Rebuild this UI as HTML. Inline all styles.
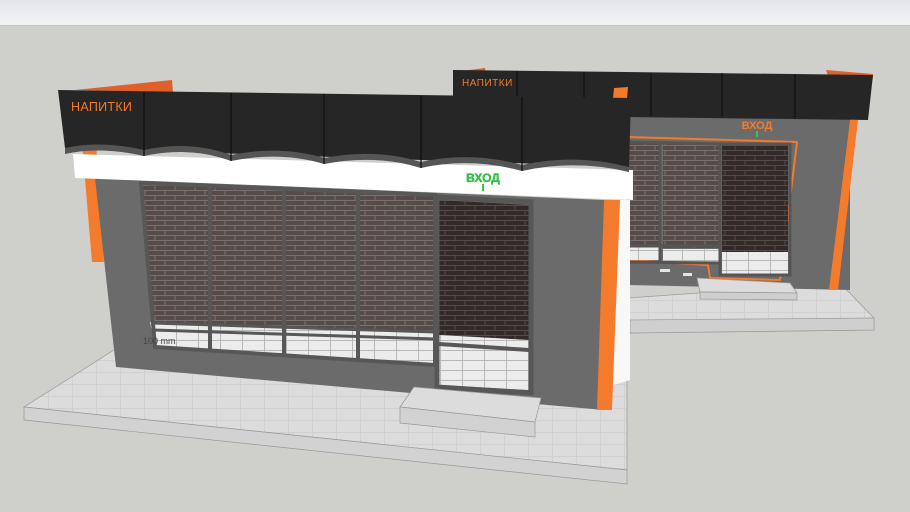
<!DOCTYPE html>
<html><head><meta charset="utf-8"><style>
html,body{margin:0;padding:0;width:910px;height:512px;overflow:hidden;background:#cfcfcb}
svg{display:block}
text{font-family:"Liberation Sans","DejaVu Sans",sans-serif}
</style></head><body>
<svg width="910" height="512" viewBox="0 0 910 512" xmlns="http://www.w3.org/2000/svg">
<defs>
<linearGradient id="sky" x1="0" y1="0" x2="0" y2="1"><stop offset="0" stop-color="#e3e6e9"/><stop offset="1" stop-color="#f1f2f3"/></linearGradient>
<pattern id="brick" width="20" height="10" patternUnits="userSpaceOnUse">
<rect width="20" height="10" fill="#554b49"/>
<path d="M0 0.5H20M0 5.5H20M5 0V5M15 5V10" stroke="#7a7271" stroke-width="1"/>
</pattern>
<pattern id="brickd" width="20" height="10" patternUnits="userSpaceOnUse">
<rect width="20" height="10" fill="#322a29"/>
<path d="M0 0.5H20M0 5.5H20M5 0V5M15 5V10" stroke="#544c4b" stroke-width="1"/>
</pattern>
<pattern id="tile" width="24" height="12" patternUnits="userSpaceOnUse">
<rect width="24" height="12" fill="#dcdcdc"/>
<path d="M0 0.5H24M0.5 0V12" stroke="#d0d0d0" stroke-width="1"/>
</pattern>
<pattern id="floor" width="22" height="10" patternUnits="userSpaceOnUse">
<rect width="22" height="10" fill="#ececec"/>
<path d="M0 0.5H22M0.5 0V10" stroke="#b8b8b8" stroke-width="1"/>
</pattern>
</defs>
<rect width="910" height="25" fill="url(#sky)"/>
<rect y="25" width="910" height="1" fill="#c4c4c0"/>

<!-- BACK BUILDING -->
<polygon points="600,300 840,283 874,318 874,330 630,333 600,320" fill="url(#tile)" stroke="#999" stroke-width="0.7"/>
<polygon points="630,320 874,318 874,330 630,333" fill="#cfcfcf" stroke="#999" stroke-width="0.7"/>
<polygon points="628,110 850,118 850,290 628,285" fill="#6b6b6b"/>
<polygon points="850,120 858,120 838,290 829,290" fill="#f47a2c"/>
<polygon points="628,137 797,142 780,280 710,278 708,265 628,260" fill="none" stroke="#f47a2c" stroke-width="2"/>
<rect x="629" y="142" width="30" height="104" fill="url(#brick)"/>
<rect x="663" y="143" width="56" height="105" fill="url(#brick)"/>
<rect x="629" y="247" width="30" height="13" fill="url(#floor)"/>
<rect x="663" y="249" width="56" height="13" fill="url(#floor)"/>
<path d="M628 142 L720 144 L720 263 L628 262 Z M660 142V262 M628 246H720" fill="none" stroke="#555" stroke-width="3"/>
<rect x="722" y="145" width="66" height="108" fill="url(#brickd)"/>
<rect x="722" y="252" width="66" height="22" fill="url(#floor)"/>
<rect x="720" y="144" width="70" height="131" fill="none" stroke="#555" stroke-width="3"/>
<rect x="660" y="269" width="10" height="3" fill="#dfe6ea"/>
<rect x="683" y="273" width="9" height="3" fill="#dfe6ea"/>
<polygon points="697,278 790,283 797,293 700,292" fill="#dcdcdc" stroke="#999" stroke-width="0.7"/>
<polygon points="700,292 797,293 797,300 700,299" fill="#cfcfcf" stroke="#999" stroke-width="0.7"/>
<text x="757" y="129" font-size="11" fill="#f47a2c" text-anchor="middle" font-weight="bold">ВХОД</text>
<path d="M757 131V137" stroke="#2ecc40" stroke-width="2"/>
<polygon points="453,72 485,68 486,75" fill="#e0602a"/>
<polygon points="826,70 873,74 873,78 828,76" fill="#e0602a"/>
<polygon points="453,70 873,75 868,120 628,117 453,98" fill="#262626"/>
<path d="M517 71V100 M584 72V110 M651 73V116 M722 73V117 M795 74V119" stroke="#111" stroke-width="1.2"/>
<text x="462" y="86" font-size="10" fill="#f47a2c" letter-spacing="0.5">НАПИТКИ</text>
<polygon points="614,88 628,87 626,110 612,110" fill="#f47a2c"/>

<!-- FRONT BUILDING -->
<polygon points="114,350 627,340 627,470 24,407" fill="url(#tile)" stroke="#999" stroke-width="0.7"/>
<polygon points="24,407 627,470 627,484 24,420" fill="#d2d2d2" stroke="#999" stroke-width="0.7"/>
<polygon points="613,200 630,200 630,380 613,385" fill="#f8f8f8"/>
<polygon points="82,143 96,143 104,262 92,262" fill="#f47a2c"/>
<polygon points="95,178 604,200 604,410 116,367" fill="#6b6b6b"/>
<polygon points="604,200 620,200 612,410 597,410" fill="#f47a2c"/>
<!-- windows -->
<polygon points="143,185 433,195 433,365 155,347" fill="url(#brick)"/>
<polygon points="150,322 433,332 433,365 155,347" fill="url(#floor)"/>
<path d="M141 183 L435 195 L435 365 L155 347 Z" fill="none" stroke="#575757" stroke-width="4"/>
<path d="M210 186V352 M284 189V357 M358 192V361" stroke="#575757" stroke-width="4"/>
<path d="M152 323 L435 332 M153 330 L435 339" stroke="#575757" stroke-width="3"/>
<polygon points="439,200 529,205 529,340 439,335" fill="url(#brickd)"/>
<polygon points="439,335 529,340 529,390 439,385" fill="url(#floor)"/>
<path d="M437 197 L531 202 L531 393 L437 387 Z" fill="none" stroke="#575757" stroke-width="5"/>
<path d="M439 344 L529 350" stroke="#575757" stroke-width="4"/>
<text x="143" y="344" font-size="9" fill="#444" font-family="Liberation Serif,serif">100 mm</text>
<!-- step -->
<polygon points="414,387 541,398 535,422 400,407" fill="#dcdcdc" stroke="#999" stroke-width="0.7"/>
<polygon points="400,407 535,422 535,437 400,423" fill="#d2d2d2" stroke="#999" stroke-width="0.7"/>
<!-- white band -->
<polygon points="73,154 633,170 633,200 75,178" fill="#ffffff"/>
<text x="483" y="182" font-size="12" fill="#2ecc40" text-anchor="middle" font-weight="bold" stroke="#1a9a2a" stroke-width="0.3">ВХОД</text>
<path d="M483 184V191" stroke="#2ecc40" stroke-width="2"/>
<!-- awning -->
<polygon points="75,90 172,80 173,92" fill="#e0602a"/>
<polygon points="58,90 631,98 629,167 65,148" fill="#262626"/>
<path d="M65 148 Q100 140 144 150 Q190 140 231 155 Q280 145 324 158 Q375 148 421 162 Q470 151 522 165 Q575 153 629 167 L629 172 Q575 159 522 171 Q470 157 421 168 Q375 154 324 164 Q280 151 231 161 Q190 146 144 156 Q100 146 65 154 Z" fill="#555"/>
<path d="M144 92V156 M231 93V161 M324 94V164 M421 96V168 M522 97V171" stroke="#111" stroke-width="1.3"/>
<text x="71" y="111" font-size="12.5" fill="#f47a2c" letter-spacing="0.3">НАПИТКИ</text>
</svg>
</body></html>
